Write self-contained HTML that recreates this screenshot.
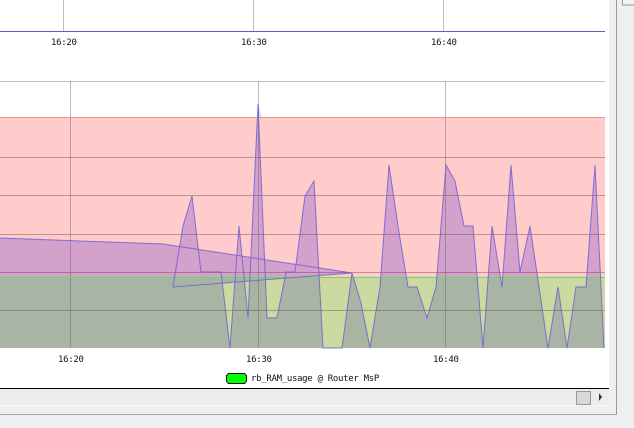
<!DOCTYPE html>
<html><head><style>
html,body{margin:0;padding:0;width:634px;height:428px;overflow:hidden;background:#efefef;font-family:"DejaVu Sans Mono","Liberation Mono",monospace;}
#wrap{position:relative;width:634px;height:428px;}
.t{position:absolute;font-size:9px;color:#111;letter-spacing:-0.3px;}
</style></head><body><div id="wrap">
<svg width="634" height="428" style="position:absolute;left:0;top:0" shape-rendering="crispEdges">
<defs>
<clipPath id="cp"><rect x="0" y="117" width="605" height="161"/></clipPath>
<clipPath id="cg"><rect x="0" y="278" width="605" height="70"/></clipPath>
</defs>
<rect x="0" y="0" width="609" height="405" fill="#fff"/>
<rect x="609" y="0" width="25" height="428" fill="#efefef"/>
<line x1="616.5" y1="0" x2="616.5" y2="414" stroke="#9a9a9a"/>
<rect x="622.5" y="-1" width="12" height="6" fill="#f4f4f4" stroke="#999"/>
<!-- top small axis -->
<line x1="63.5" y1="0" x2="63.5" y2="31" stroke="#bbb"/>
<line x1="253.5" y1="0" x2="253.5" y2="31" stroke="#bbb"/>
<line x1="443.5" y1="0" x2="443.5" y2="31" stroke="#bbb"/>
<line x1="0" y1="31.5" x2="605" y2="31.5" stroke="#5560cc"/>
<line x1="0" y1="81.5" x2="605" y2="81.5" stroke="#c0c0c0"/>
<!-- bands -->
<rect x="0" y="117" width="605" height="161" fill="#ffcbcb"/>
<rect x="0" y="278" width="605" height="70" fill="#ccd9a1"/>
<g shape-rendering="auto">
<path id="s" d="M0,348 L0,238 L163,244 L352,273 L173,287 L183,226 L192,196 L201,272 L221,272 L230,348 L239,226 L248,318 L258,104 L267,318 L277,318 L286,272 L295,272 L305,196 L314,181 L323,348 L342,348 L352,273 L361,303 L370,348 L380,287 L389,165 L398,226 L408,287 L417,287 L427,318 L436,287 L446,165 L455,181 L464,226 L473,226 L483,348 L492,226 L502,287 L511,165 L520,272 L530,226 L539,287 L548,348 L558,287 L567,348 L576,287 L586,287 L595,165 L604,348 Z" fill="#d4a0cc" clip-path="url(#cp)"/>
<path d="M0,348 L0,238 L163,244 L352,273 L173,287 L183,226 L192,196 L201,272 L221,272 L230,348 L239,226 L248,318 L258,104 L267,318 L277,318 L286,272 L295,272 L305,196 L314,181 L323,348 L342,348 L352,273 L361,303 L370,348 L380,287 L389,165 L398,226 L408,287 L417,287 L427,318 L436,287 L446,165 L455,181 L464,226 L473,226 L483,348 L492,226 L502,287 L511,165 L520,272 L530,226 L539,287 L548,348 L558,287 L567,348 L576,287 L586,287 L595,165 L604,348 Z" fill="#a9b5a4" clip-path="url(#cg)"/>
<path d="M258,117 L258,104 L262,117 Z" fill="#d8d8f0"/>
</g>
<!-- grid -->
<g stroke="rgba(90,60,60,0.4)">
<line x1="0" y1="157.5" x2="605" y2="157.5"/>
<line x1="0" y1="195.5" x2="605" y2="195.5"/>
<line x1="0" y1="234.5" x2="605" y2="234.5"/>
<line x1="0" y1="272.5" x2="605" y2="272.5"/>
<line x1="0" y1="310.5" x2="605" y2="310.5"/>
</g>
<g stroke="rgba(100,100,100,0.45)">
<line x1="70.5" y1="81" x2="70.5" y2="348"/>
<line x1="258.5" y1="81" x2="258.5" y2="348"/>
<line x1="445.5" y1="81" x2="445.5" y2="348"/>
</g>
<line x1="0" y1="117.5" x2="605" y2="117.5" stroke="#f09090"/>
<line x1="0" y1="277.5" x2="605" y2="277.5" stroke="#66dd55"/>
<path d="M0,238 L163,244 L352,273 L173,287 L183,226 L192,196 L201,272 L221,272 L230,348 L239,226 L248,318 L258,104 L267,318 L277,318 L286,272 L295,272 L305,196 L314,181 L323,348 L342,348 L352,273 L361,303 L370,348 L380,287 L389,165 L398,226 L408,287 L417,287 L427,318 L436,287 L446,165 L455,181 L464,226 L473,226 L483,348 L492,226 L502,287 L511,165 L520,272 L530,226 L539,287 L548,348 L558,287 L567,348 L576,287 L586,287 L595,165 L604,348" fill="none" stroke="#7060d0" stroke-width="1" shape-rendering="auto" opacity="0.85"/>
<!-- legend -->
<rect x="226.5" y="373.5" width="20" height="10" rx="3" fill="#00ff00" stroke="#111"/>
<!-- scroll area -->
<line x1="0" y1="388.5" x2="609" y2="388.5" stroke="#000"/>
<rect x="0" y="389" width="609" height="16" fill="#ececec"/>
<line x1="0" y1="405.5" x2="609" y2="405.5" stroke="#f8f8f8"/>
<rect x="576.5" y="391.5" width="14" height="13" fill="#d8d8d8" stroke="#999"/>
<path d="M599,393 L602,397 L599,401 Z" fill="#333"/>
<line x1="0" y1="414.5" x2="617" y2="414.5" stroke="#a8a8a8"/>
</svg>
<div class="t" style="left:51px;top:38px">16:20</div>
<div class="t" style="left:241px;top:38px">16:30</div>
<div class="t" style="left:431px;top:38px">16:40</div>
<div class="t" style="left:58px;top:355px">16:20</div>
<div class="t" style="left:246px;top:355px">16:30</div>
<div class="t" style="left:433px;top:355px">16:40</div>
<div class="t" style="left:251px;top:374px">rb_RAM_usage @ Router MsP</div>
</div></body></html>
